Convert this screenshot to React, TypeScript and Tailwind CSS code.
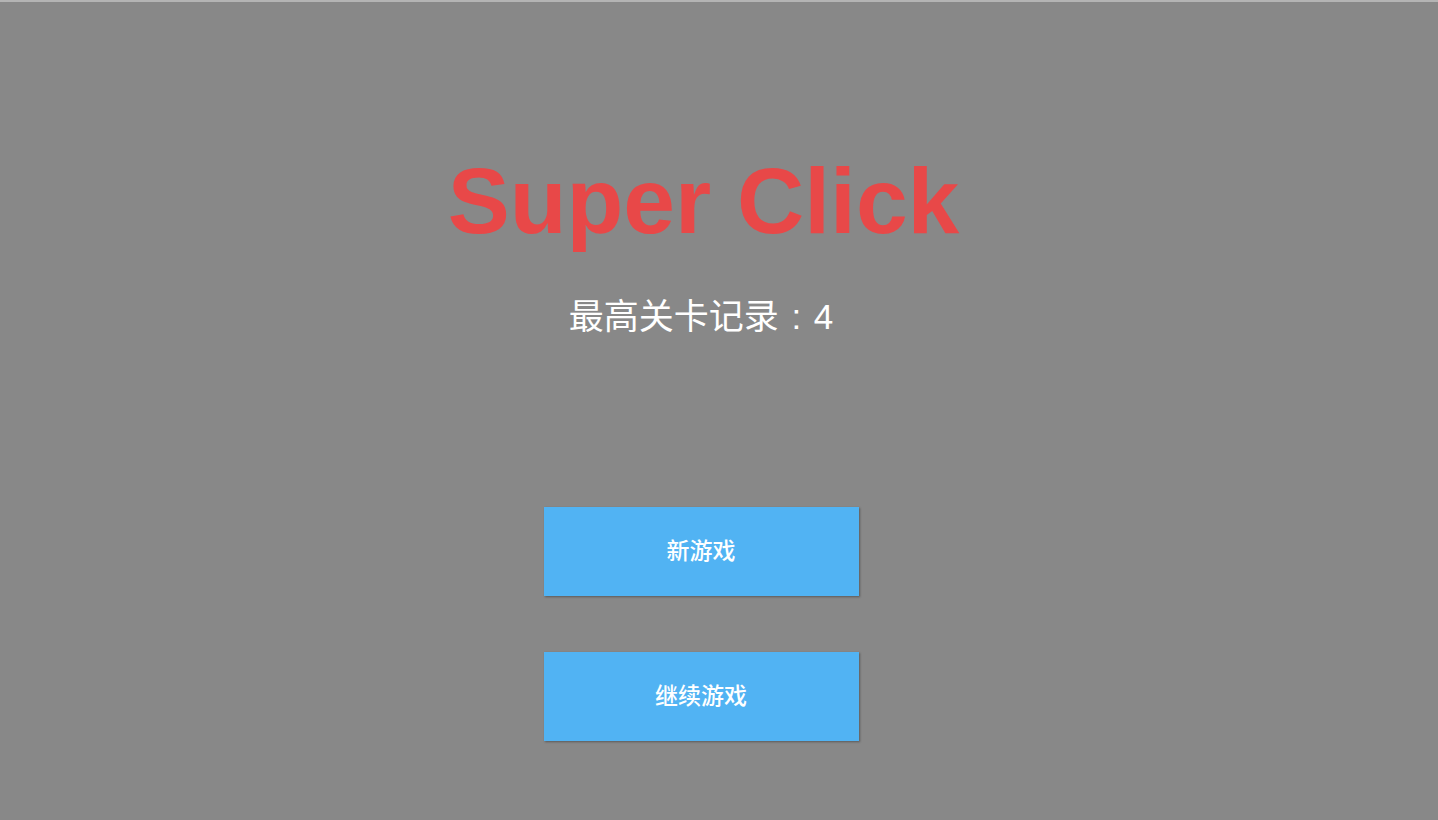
import React from 'react';

function MenuButton({ label }: { label: string }) {
  return (
    <button className="w-[315px] h-[89px] bg-[#51b3f3] font-['Liberation_Sans','Noto_Sans_CJK_SC',sans-serif] text-white text-[23px] font-medium shadow-[1px_1px_2px_rgba(0,0,0,0.35)] cursor-pointer">
      {label}
    </button>
  );
}

export default function App() {
  const best = 4;

  return (
    <div className="w-full h-screen bg-[#888888] border-t-2 border-[#b4b4b4] overflow-hidden">
      <div className="flex flex-col items-center pr-[36px] pt-[151px]">
        <h1 className="ml-[5px] font-['Liberation_Sans',Arial,sans-serif] text-[93px] leading-[96px] font-bold text-[#e84848]">
          Super Click
        </h1>

        <p className="mt-[51px] font-['Liberation_Sans','Noto_Sans_CJK_SC',sans-serif] text-[35px] leading-[34px] text-white">
          最高关卡记录
          <span className="inline-block w-[1em] text-center">:</span>
          {best}
        </p>

        <div className="mt-[173px] flex flex-col gap-[56px]">
          <MenuButton label="新游戏" />
          <MenuButton label="继续游戏" />
        </div>
      </div>
    </div>
  );
}
